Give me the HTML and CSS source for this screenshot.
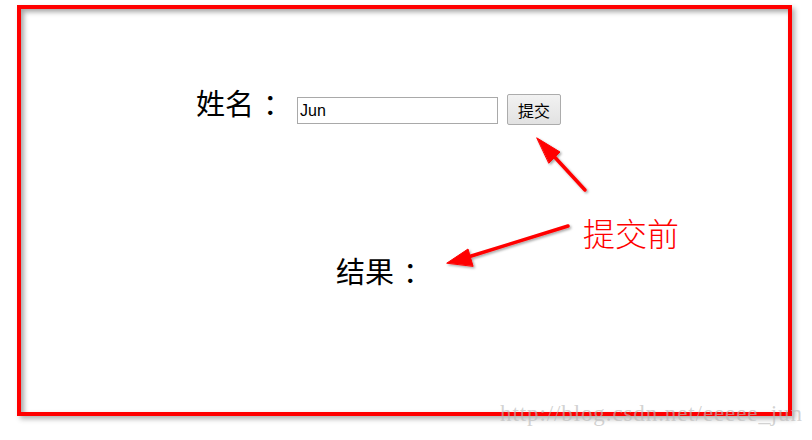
FILE: index.html
```html
<!DOCTYPE html>
<html lang="zh">
<head>
<meta charset="utf-8">
<title>提交前</title>
<link rel="stylesheet" href="styles.css">
</head>
<body>
<div class="frame">
  <form class="row row-name">
    <label class="label">姓名<span class="colon">：</span></label>
    <input class="field" type="text" value="Jun">
    <button class="btn" type="button">提交</button>
  </form>
  <div class="row row-result">
    <span class="label">结果<span class="colon">：</span></span>
  </div>
</div>
<div class="note">提交前</div>
<svg class="arrows" width="812" height="440" viewBox="0 0 812 440">
  <defs>
    <filter id="sh" x="-20%" y="-20%" width="140%" height="140%">
      <feDropShadow dx="1.5" dy="1.5" stdDeviation="1.2" flood-color="#000" flood-opacity="0.35"/>
    </filter>
  </defs>
  <g filter="url(#sh)" fill="#f00" stroke="#f00" stroke-linecap="round" stroke-linejoin="round">
    <line x1="585" y1="190" x2="550" y2="152" stroke-width="3.5"/>
    <polygon points="537,138 560,152 549,163" stroke-width="1"/>
    <line x1="568" y1="226" x2="468" y2="257" stroke-width="3.5"/>
    <polygon points="447,263 468,249 473,266" stroke-width="1"/>
  </g>
</svg>
<div class="watermark">http://blog.csdn.net/eeeee_jun</div>
</body>
</html>
```
FILE: styles.css
```css
html, body {
  margin: 0;
  padding: 0;
  background: #fff;
}
body {
  position: relative;
  width: 812px;
  height: 440px;
  overflow: hidden;
  font-family: "Noto Sans CJK SC", "Liberation Sans", sans-serif;
}
.frame {
  box-sizing: border-box;
  margin: 5px 0 0 17px;
  width: 775px;
  height: 411px;
  border: 4px solid #f00;
  box-shadow: inset 3px 3px 5px rgba(0,0,0,0.35), 3px 3px 5px rgba(0,0,0,0.3);
  padding-top: 76px;
}
.row {
  display: flex;
  align-items: flex-start;
  margin: 0;
}
.row-name {
  padding-left: 175px;
  height: 40px;
}
.row-result {
  padding-left: 315px;
  margin-top: 128px;
  height: 40px;
}
.label {
  font-family: "Noto Sans CJK SC", sans-serif;
  font-size: 29px;
  line-height: 40px;
  color: #000;
  margin-top: -3px;
}
.colon {
  padding-left: 9px;
}
.field {
  box-sizing: border-box;
  width: 201px;
  height: 27px;
  margin: 12px 0 0 5px;
  padding: 0 2px;
  border: 1px solid #a9a9a9;
  font-family: "Liberation Sans", Arial, sans-serif;
  font-size: 16px;
  color: #000;
  outline: none;
}
.btn {
  box-sizing: border-box;
  width: 54px;
  height: 31px;
  margin: 9px 0 0 9px;
  padding: 0;
  border: 1px solid #acacac;
  border-radius: 2px;
  background: linear-gradient(#f2f2f2, #e2e2e2);
  font-family: "Noto Sans CJK SC", sans-serif;
  font-size: 16px;
  color: #000;
}
.note {
  position: absolute;
  left: 583px;
  top: 208px;
  font-family: "Noto Sans CJK SC", sans-serif;
  font-weight: 300;
  font-size: 32px;
  line-height: 48px;
  color: #f00;
}
.arrows {
  position: absolute;
  left: 0;
  top: 0;
}
.watermark {
  position: absolute;
  left: 500px;
  top: 401px;
  font-family: "Liberation Serif", serif;
  font-size: 23px;
  letter-spacing: 0.9px;
  color: rgba(185,185,185,0.65);
}
```
